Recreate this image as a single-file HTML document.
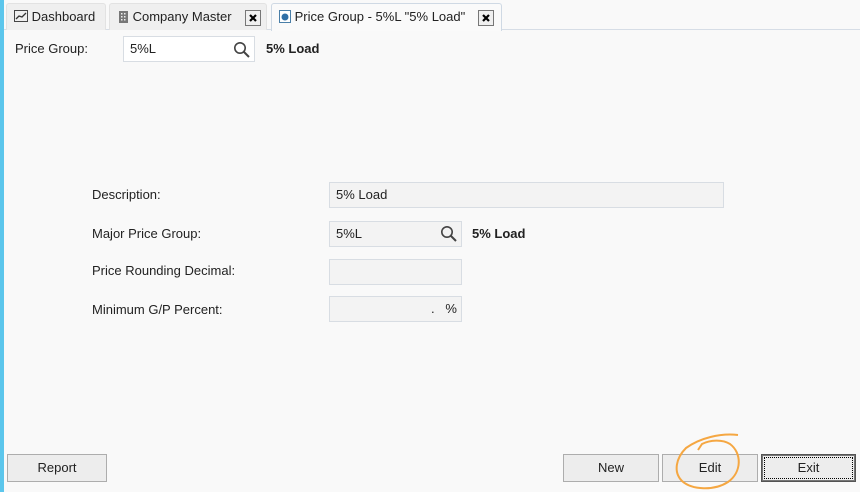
<!DOCTYPE html>
<html><head><meta charset="utf-8"><style>
*{box-sizing:border-box;margin:0;padding:0}
body{width:860px;height:492px;overflow:hidden;background:#f9f9f9;font-family:"Liberation Sans","DejaVu Sans",sans-serif;font-size:13px;color:#222;position:relative}
.abs{position:absolute}
.bar{left:0;top:0;width:4px;height:492px;background:#5cc6ec}
.tabs{left:0;top:0;width:860px;height:30px;background:#f9f9f9;border-bottom:1px solid #d6dde6}
.tab{position:absolute;top:3px;height:27px;background:#efefef;border:1px solid #e2e2e2;border-bottom:none;border-radius:3px 3px 0 0;line-height:26px;white-space:nowrap}
.tab.act{background:#fafafa;border-color:#cfd9e4;height:28px}
.x{position:absolute;top:6px;width:16px;height:16px;border:1px solid #777;background:#f0f0f0}
.lbl{font-size:13px;color:#222}
.inp{position:absolute;border:1px solid #d8dde3;background:#f3f3f3;height:26px;line-height:24px;padding-left:6px}
.btn{position:absolute;top:454px;height:28px;border:1px solid #adadad;background:#ededed;text-align:center;line-height:26px;font-size:13px}
.b{font-weight:bold}
</style></head><body>
<div class="abs tabs"></div>
<div class="tab" style="left:6px;width:100px;padding-left:7px">
<svg width="14" height="12" style="vertical-align:-1px"><rect x="0.5" y="0.5" width="13" height="11" fill="#eee" stroke="#444"/><polyline points="2,9 5,6 8,7 12,3" fill="none" stroke="#333" stroke-width="1.3"/></svg> Dashboard</div>
<div class="tab" style="left:109px;width:158px;padding-left:8px">
<svg width="11" height="13" style="vertical-align:-2px"><rect x="1" y="1" width="9" height="12" fill="#777"/><rect x="3" y="3" width="1.5" height="1.5" fill="#eee"/><rect x="6" y="3" width="1.5" height="1.5" fill="#eee"/><rect x="3" y="6" width="1.5" height="1.5" fill="#eee"/><rect x="6" y="6" width="1.5" height="1.5" fill="#eee"/><rect x="3" y="9" width="1.5" height="1.5" fill="#eee"/><rect x="6" y="9" width="1.5" height="1.5" fill="#eee"/></svg> Company Master
<div class="x" style="left:135px"><svg width="14" height="14" style="position:absolute;left:0;top:0"><path d="M4 4L10 10M10 4L4 10" stroke="#000" stroke-width="2.2"/></svg></div></div>
<div class="tab act" style="left:271px;width:231px;padding-left:7px">
<svg width="12" height="13" style="vertical-align:-2px"><rect x="0.5" y="0.5" width="11" height="12" fill="#fff" stroke="#4a7fa8"/><circle cx="6" cy="7" r="3.5" fill="#2f6fa6"/></svg> Price Group - 5%L "5% Load"
<div class="x" style="left:206px"><svg width="14" height="14" style="position:absolute;left:0;top:0"><path d="M4 4L10 10M10 4L4 10" stroke="#000" stroke-width="2.2"/></svg></div></div>
<div class="abs bar"></div>

<div class="abs lbl" style="left:15px;top:41px">Price Group:</div>
<div class="inp" style="left:123px;top:36px;width:132px;background:#fff">5%L
<svg class="abs" style="right:3px;top:4px" width="18" height="18"><circle cx="7" cy="7" r="5.2" fill="none" stroke="#444" stroke-width="1.6"/><line x1="11" y1="11" x2="16" y2="16" stroke="#444" stroke-width="2"/></svg></div>
<div class="abs b" style="left:266px;top:41px">5% Load</div>

<div class="abs lbl" style="left:92px;top:187px">Description:</div>
<div class="inp" style="left:329px;top:182px;width:395px">5% Load</div>
<div class="abs lbl" style="left:92px;top:226px">Major Price Group:</div>
<div class="inp" style="left:329px;top:221px;width:133px">5%L
<svg class="abs" style="right:3px;top:3px" width="18" height="18"><circle cx="7" cy="7" r="5.2" fill="none" stroke="#444" stroke-width="1.6"/><line x1="11" y1="11" x2="16" y2="16" stroke="#444" stroke-width="2"/></svg></div>
<div class="abs b" style="left:472px;top:226px">5% Load</div>
<div class="abs lbl" style="left:92px;top:263px">Price Rounding Decimal:</div>
<div class="inp" style="left:329px;top:259px;width:133px"></div>
<div class="abs lbl" style="left:92px;top:302px">Minimum G/P Percent:</div>
<div class="inp" style="left:329px;top:296px;width:133px;text-align:right;padding-right:4px">.&nbsp;&nbsp;&nbsp;%</div>

<div class="btn" style="left:7px;width:100px">Report</div>
<div class="btn" style="left:563px;width:96px">New</div>
<div class="btn" style="left:662px;width:96px">Edit</div>
<div class="btn" style="left:761px;width:95px;border:1px solid #555;box-shadow:inset 0 0 0 1px #777"><div style="position:absolute;left:2px;top:2px;right:2px;bottom:2px;border:1px dotted #000;line-height:20px">Exit</div></div>
<svg class="abs" style="left:670px;top:428px" width="80" height="64"><path d="M68 7 C50 5 30 10 16 20 C6 30 3 44 12 53 C22 62 44 63 58 54 C72 44 72 25 60 16 C52 11 40 12 32 16 L28 22" fill="none" stroke="#f5a742" stroke-width="2"/></svg>
</body></html>
